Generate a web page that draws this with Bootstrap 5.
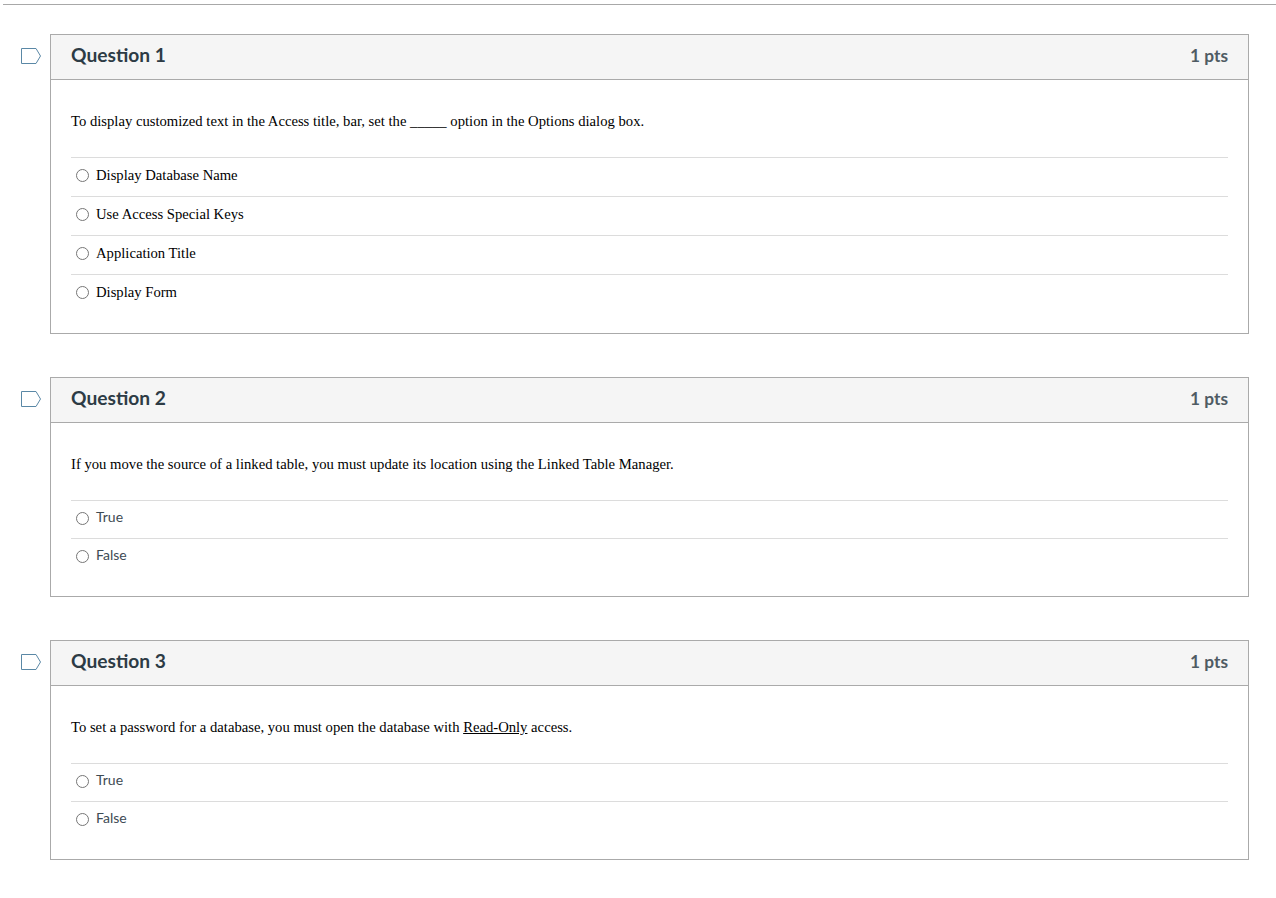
<!DOCTYPE html>
<html lang="en">
<head>
<meta charset="utf-8">
<title>Quiz</title>
<link rel="stylesheet" href="https://cdn.jsdelivr.net/npm/bootstrap@5.3.0/dist/css/bootstrap.min.css">
<style>
body{background:#fff;font-family:Lato,"Liberation Sans",sans-serif;color:#2d3b45;margin:0;padding:4px 0 0 3px;}
.top-rule{height:1px;background:#a8a8a8;margin:0 0 29px;}
.quiz-item{margin:0 27px 43px 47px;position:relative;}
.flag-mark{position:absolute;left:-29px;top:14px;width:20px;height:16px;}
.quiz-panel{border:1px solid #aaa;border-radius:0;}
.quiz-head{background:#f5f5f5;border-bottom:1px solid #aaa;height:45px;padding:0 20px;}
.quiz-name{font-size:19.2px;font-weight:700;color:#2d3b45;margin:-5px 0 0;line-height:1;}
.quiz-pts{font-size:17.3px;font-weight:700;color:#4f5b63;margin-top:-2px;}
.quiz-body{padding:20px 20px 20px;}
.quiz-text{font-family:"Liberation Serif",serif;font-size:14.67px;line-height:21px;color:#000;margin:11px 0 25px;padding:0;}
.answer-row{border-top:1px solid #dcdcdc;height:39px;padding-left:5px;gap:7px;}
.answer-row.lato-row{height:38px;}
.answer-dot{width:13px;height:13px;border:1px solid #767676;border-radius:50%;flex:none;margin-top:-3px;}
.answer-label{font-family:"Liberation Serif",serif;font-size:14.67px;color:#000;line-height:1;margin-top:-3px;}
.lato-row .answer-dot{margin-top:-2px;}
.lato-row .answer-label{font-family:Lato,sans-serif;font-size:14px;color:#3e4b54;margin-top:-5px;}
.quiz-text u{text-underline-offset:1px;}
</style>
</head>
<body>
<div class="top-rule"></div>

<section class="quiz-item">
<svg class="flag-mark" viewBox="0 0 20 16" aria-hidden="true"><path d="M.5.500H15L19.500 8L15 15.500H.5Z" fill="#fff" stroke="#5a88a6"/></svg>
<div class="quiz-panel">
<div class="quiz-head d-flex justify-content-between align-items-center">
<h2 class="quiz-name">Question 1</h2><span class="quiz-pts">1 pts</span>
</div>
<div class="quiz-body">
<p class="quiz-text">To display customized text in the Access title, bar, set the _____ option in the Options dialog box.</p>
<div class="answer-row d-flex align-items-center"><span class="answer-dot"></span><span class="answer-label">Display Database Name</span></div>
<div class="answer-row d-flex align-items-center"><span class="answer-dot"></span><span class="answer-label">Use Access Special Keys</span></div>
<div class="answer-row d-flex align-items-center"><span class="answer-dot"></span><span class="answer-label">Application Title</span></div>
<div class="answer-row d-flex align-items-center"><span class="answer-dot"></span><span class="answer-label">Display Form</span></div>
</div>
</div>
</section>

<section class="quiz-item">
<svg class="flag-mark" viewBox="0 0 20 16" aria-hidden="true"><path d="M.5.500H15L19.500 8L15 15.500H.5Z" fill="#fff" stroke="#5a88a6"/></svg>
<div class="quiz-panel">
<div class="quiz-head d-flex justify-content-between align-items-center">
<h2 class="quiz-name">Question 2</h2><span class="quiz-pts">1 pts</span>
</div>
<div class="quiz-body">
<p class="quiz-text">If you move the source of a linked table, you must update its location using the Linked Table Manager.</p>
<div class="answer-row lato-row d-flex align-items-center"><span class="answer-dot"></span><span class="answer-label">True</span></div>
<div class="answer-row lato-row d-flex align-items-center"><span class="answer-dot"></span><span class="answer-label">False</span></div>
</div>
</div>
</section>

<section class="quiz-item">
<svg class="flag-mark" viewBox="0 0 20 16" aria-hidden="true"><path d="M.5.500H15L19.500 8L15 15.500H.5Z" fill="#fff" stroke="#5a88a6"/></svg>
<div class="quiz-panel">
<div class="quiz-head d-flex justify-content-between align-items-center">
<h2 class="quiz-name">Question 3</h2><span class="quiz-pts">1 pts</span>
</div>
<div class="quiz-body">
<p class="quiz-text">To set a password for a database, you must open the database with <u>Read-Only</u> access.</p>
<div class="answer-row lato-row d-flex align-items-center"><span class="answer-dot"></span><span class="answer-label">True</span></div>
<div class="answer-row lato-row d-flex align-items-center"><span class="answer-dot"></span><span class="answer-label">False</span></div>
</div>
</div>
</section>

<script src="https://cdn.jsdelivr.net/npm/bootstrap@5.3.0/dist/js/bootstrap.bundle.min.js"></script>
</body>
</html>
